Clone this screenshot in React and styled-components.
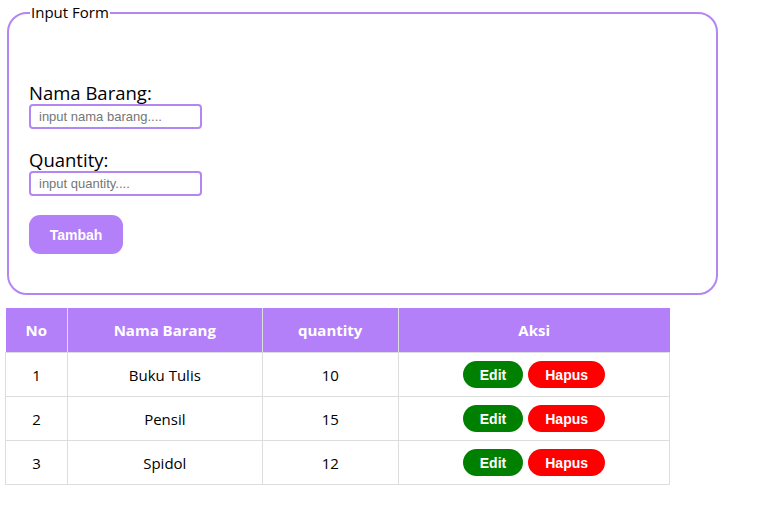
import React from "react";
import styled, { createGlobalStyle } from "styled-components";

const Global = createGlobalStyle`
  html, body { margin: 0; padding: 0; background: #fff; }
  body { font-family: "Trebuchet MS", "Open Sans", sans-serif; color: #000; }
`;

const Page = styled.div`
  padding: 4px 0 0 5px;
  display: flex;
  flex-direction: column;
  align-items: flex-start;
`;

const FormBox = styled.fieldset`
  margin: 0 0 0 2px;
  width: 711px;
  box-sizing: border-box;
  border: 2px solid #b386f2;
  border-radius: 20px;
  padding: 61px 20px 39px 20px;
  display: flex;
  flex-direction: column;
  align-items: flex-start;
`;

const Legend = styled.legend`
  font-size: 15px;
  padding: 0 1px;
  margin-left: 1px;
  line-height: 17px;
`;

const Label = styled.label`
  font-size: 18.5px;
  line-height: 21px;
  margin-top: ${(p) => (p.$first ? "0" : "20px")};
  margin-bottom: 1px;
`;

const Input = styled.input`
  width: 173px;
  height: 25px;
  box-sizing: border-box;
  border: 2px solid #b386f2;
  border-radius: 4px;
  padding: 0 8px;
  font-family: "Liberation Sans", Arial, sans-serif;
  font-size: 13px;
  outline: none;
  &::placeholder { color: #767676; }
`;

const AddButton = styled.button`
  margin-top: 19px;
  width: 94px;
  height: 39px;
  border: none;
  border-radius: 11px;
  background: #b380fa;
  color: #fff;
  font-family: "Liberation Sans", Arial, sans-serif;
  font-weight: bold;
  font-size: 14px;
`;

const Table = styled.table`
  margin-top: 13px;
  width: 665px;
  border-collapse: collapse;
  font-size: 15px;
  text-align: center;
`;

const Th = styled.th`
  background: #b380fa;
  color: #fff;
  font-weight: bold;
  height: 44px;
  padding: 0;
  border: 1px solid #ddd;
  border-top: none;
  width: ${(p) => p.$w}px;
  &:first-child { border-left: none; }
  &:last-child { border-right: none; }
`;

const Td = styled.td`
  height: 43px;
  padding: 0;
  border: 1px solid #ddd;
`;

const Actions = styled.div`
  display: flex;
  justify-content: center;
  gap: 5px;
`;

const ActionButton = styled.button`
  height: 27px;
  padding: 0 17px;
  border: none;
  border-radius: 14px;
  background: ${(p) => (p.$danger ? "#ff0000" : "#008000")};
  color: #fff;
  font-family: "Liberation Sans", Arial, sans-serif;
  font-weight: bold;
  font-size: 14px;
`;

const rows = [
  { no: 1, nama: "Buku Tulis", qty: 10 },
  { no: 2, nama: "Pensil", qty: 15 },
  { no: 3, nama: "Spidol", qty: 12 },
];

export default function App() {
  return (
    <>
      <Global />
      <Page>
        <FormBox>
          <Legend>Input Form</Legend>
          <Label $first>Nama Barang:</Label>
          <Input placeholder="input nama barang...." />
          <Label>Quantity:</Label>
          <Input placeholder="input quantity...." />
          <AddButton>Tambah</AddButton>
        </FormBox>
        <Table>
          <thead>
            <tr>
              <Th $w={62}>No</Th>
              <Th $w={195}>Nama Barang</Th>
              <Th $w={136}>quantity</Th>
              <Th $w={272}>Aksi</Th>
            </tr>
          </thead>
          <tbody>
            {rows.map((r) => (
              <tr key={r.no}>
                <Td>{r.no}</Td>
                <Td>{r.nama}</Td>
                <Td>{r.qty}</Td>
                <Td>
                  <Actions>
                    <ActionButton>Edit</ActionButton>
                    <ActionButton $danger>Hapus</ActionButton>
                  </Actions>
                </Td>
              </tr>
            ))}
          </tbody>
        </Table>
      </Page>
    </>
  );
}
